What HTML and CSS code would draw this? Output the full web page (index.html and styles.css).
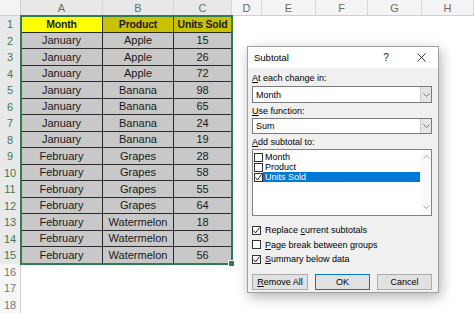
FILE: index.html
```html
<!DOCTYPE html>
<html lang="en">
<head>
  <meta charset="UTF-8" />
  <title>Subtotal</title>
  <link rel="stylesheet" href="styles.css">
</head>
<body>
  <div class="sheet">
    <div class="row col-heads">
      <div class="corner"></div>
      <div class="ch sel">A</div>
      <div class="ch sel">B</div>
      <div class="ch sel">C</div>
      <div class="ch">D</div>
      <div class="ch">E</div>
      <div class="ch">F</div>
      <div class="ch">G</div>
      <div class="ch">H</div>
    </div>
    <div id="rows"></div>
    <div class="selection"></div>
  </div>

  <div class="dialog">
    <div class="titlebar">
      <span class="title">Subtotal</span>
      <span class="tb-btn">?</span>
      <span class="tb-btn close"><svg width="9" height="9" viewBox="0 0 9 9"><path d="M0.5,0.5 L8.5,8.5 M8.5,0.5 L0.5,8.5" stroke="#222" stroke-width="0.9"/></svg></span>
    </div>
    <div class="dialog-body">
      <div class="label"><u>A</u>t each change in:</div>
      <div class="select tall">
        <span class="value">Month</span>
        <span class="arrow"><svg width="7" height="4" viewBox="0 0 7 4"><polyline points="0.5,0.5 3.5,3.5 6.5,0.5" fill="none" stroke="#777" stroke-width="1"/></svg></span>
      </div>
      <div class="label"><u>U</u>se function:</div>
      <div class="select">
        <span class="value">Sum</span>
        <span class="arrow"><svg width="7" height="4" viewBox="0 0 7 4"><polyline points="0.5,0.5 3.5,3.5 6.5,0.5" fill="none" stroke="#777" stroke-width="1"/></svg></span>
      </div>
      <div class="label"><u>A</u>dd subtotal to:</div>
      <div class="listbox">
        <div class="items">
          <div class="item"><span class="box"></span><span class="text">Month</span></div>
          <div class="item"><span class="box"></span><span class="text">Product</span></div>
          <div class="item"><span class="box"><svg width="9" height="9" viewBox="0 0 9 9"><polyline points="1.5,4.5 3.5,7 7.5,1.5" fill="none" stroke="#222" stroke-width="1"/></svg></span><span class="text active">Units Sold</span></div>
        </div>
        <div class="scrollbar">
          <svg width="7" height="4" viewBox="0 0 7 4"><polyline points="0.5,3.5 3.5,0.5 6.5,3.5" fill="none" stroke="#aaa" stroke-width="1"/></svg>
          <svg width="7" height="4" viewBox="0 0 7 4"><polyline points="0.5,0.5 3.5,3.5 6.5,0.5" fill="none" stroke="#aaa" stroke-width="1"/></svg>
        </div>
      </div>
      <div class="options">
        <div class="option"><span class="box"><svg width="9" height="9" viewBox="0 0 9 9"><polyline points="1.5,4.5 3.5,7 7.5,1.5" fill="none" stroke="#222" stroke-width="1"/></svg></span><span>Replace <u>c</u>urrent subtotals</span></div>
        <div class="option"><span class="box"></span><span><u>P</u>age break between groups</span></div>
        <div class="option"><span class="box"><svg width="9" height="9" viewBox="0 0 9 9"><polyline points="1.5,4.5 3.5,7 7.5,1.5" fill="none" stroke="#222" stroke-width="1"/></svg></span><span><u>S</u>ummary below data</span></div>
      </div>
      <div class="buttons">
        <div class="btn wide"><span><u>R</u>emove All</span></div>
        <div class="btn default">OK</div>
        <div class="btn">Cancel</div>
      </div>
    </div>
  </div>

  <script>
    const data = [
      ["Month", "Product", "Units Sold"],
      ["January", "Apple", 15],
      ["January", "Apple", 26],
      ["January", "Apple", 72],
      ["January", "Banana", 98],
      ["January", "Banana", 65],
      ["January", "Banana", 24],
      ["January", "Banana", 19],
      ["February", "Grapes", 28],
      ["February", "Grapes", 58],
      ["February", "Grapes", 55],
      ["February", "Grapes", 64],
      ["February", "Watermelon", 18],
      ["February", "Watermelon", 63],
      ["February", "Watermelon", 56]
    ];

    const rows = document.getElementById("rows");
    for (let i = 0; i < 18; i++) {
      const row = document.createElement("div");
      row.className = "row";
      const cells = data[i];
      let html = `<div class="rh ${cells ? "sel" : ""}">${i + 1}</div>`;
      if (cells) {
        cells.forEach((value, c) => {
          let cls = "cell";
          if (i === 0) cls += c === 0 ? " head active" : " head";
          html += `<div class="${cls}">${value}</div>`;
        });
      } else {
        html += `<div></div><div></div><div></div>`;
      }
      html += `<div></div><div></div><div></div><div></div><div></div>`;
      row.innerHTML = html;
      rows.appendChild(row);
    }
  </script>
</body>
</html>
```

FILE: styles.css
```css
/* Page */
body {
  margin: 0;
  width: 474px;
  height: 315px;
  overflow: hidden;
  background: #ffffff;
  font-family: "Liberation Sans", Arial, sans-serif;
}

/* Spreadsheet */
.sheet {
  position: relative;
}

.row {
  display: grid;
  grid-template-columns: 21px 82px 71px 58px 30px 54px 52px 54px 52px;
  height: 16.5px;
  font-size: 11px;
}

.col-heads {
  height: 16px;
  background: #f4f4f4;
  border-bottom: 1px solid #d0d0d0;
  box-sizing: border-box;
}

.corner {
  border-right: 1px solid #d0d0d0;
}

.ch {
  display: flex;
  align-items: center;
  justify-content: center;
  color: #6a6a6a;
  border-right: 1px solid #d6d6d6;
}

.ch.sel {
  background: #e8e8e8;
  color: #557a62;
}

.rh {
  display: flex;
  align-items: center;
  justify-content: center;
  color: #777777;
  background: #f6f6f6;
  border-right: 1px solid #d0d0d0;
}

.rh.sel {
  background: #e9e9e9;
  color: #3f7a56;
}

.cell {
  display: flex;
  align-items: center;
  justify-content: center;
  background: #c8c8c8;
  color: #1a1a1a;
  border-right: 1px solid #2a2a2a;
  border-bottom: 1px solid #2a2a2a;
  box-sizing: border-box;
}

.cell.head {
  background: #c9c200;
  font-weight: bold;
  font-size: 10.5px;
  letter-spacing: -0.2px;
}

.cell.head.active {
  background: #ffff00;
}

.selection {
  position: absolute;
  left: 20px;
  top: 15px;
  width: 213px;
  height: 250px;
  border: 2px solid #2e7d4f;
  box-sizing: border-box;
  pointer-events: none;
}

.selection::after {
  content: "";
  position: absolute;
  right: -4px;
  bottom: -4px;
  width: 5px;
  height: 5px;
  background: #2e7d4f;
  border: 1px solid #ffffff;
}

/* Subtotal dialog */
.dialog {
  position: absolute;
  left: 247px;
  top: 46px;
  width: 192px;
  height: 247px;
  box-sizing: border-box;
  background: #f0f0f0;
  border: 1px solid #a0a0a0;
  box-shadow: 2px 4px 12px rgba(0, 0, 0, 0.3);
  font-size: 9px;
  color: #000000;
  display: flex;
  flex-direction: column;
}

.titlebar {
  height: 21px;
  background: #ffffff;
  display: flex;
  align-items: center;
  padding: 0 7px 0 6px;
  font-size: 9.5px;
}

.title {
  flex: 1;
}

.tb-btn {
  width: 20px;
  display: flex;
  justify-content: center;
  font-size: 10px;
  color: #222222;
}

.tb-btn.close {
  margin-left: 15px;
}

.dialog-body {
  padding: 0 6px 0 4px;
  display: flex;
  flex-direction: column;
}

.label {
  line-height: 12px;
  margin-top: 2px;
}

.label:first-child {
  margin-top: 4px;
}

.select {
  height: 16px;
  margin-top: 1px;
  display: flex;
  background: #ffffff;
  border: 1px solid #7a7a7a;
  box-sizing: border-box;
}

.select.tall {
  height: 17px;
  margin-top: 2px;
}

.select .value {
  flex: 1;
  display: flex;
  align-items: center;
  padding-left: 3px;
}

.arrow {
  width: 10px;
  display: flex;
  align-items: center;
  justify-content: center;
  background: #e5e5e5;
  border-left: 1px solid #cfcfcf;
}

.listbox {
  height: 67px;
  margin-top: 1px;
  display: flex;
  background: #ffffff;
  border: 1px solid #828282;
  box-sizing: border-box;
}

.items {
  flex: 1;
  padding-top: 2px;
}

.item {
  height: 10px;
  display: flex;
  align-items: center;
}

.item .box {
  margin-left: 1px;
}

.item .text {
  flex: 1;
  height: 10px;
  line-height: 10px;
  padding-left: 2px;
  margin-right: 1px;
}

.item .text.active {
  background: #0078d7;
  color: #ffffff;
}

.scrollbar {
  width: 10px;
  display: flex;
  flex-direction: column;
  justify-content: space-between;
  align-items: center;
  padding: 5px 0 6px;
  background: #fafafa;
}

.box {
  width: 9px;
  height: 9px;
  box-sizing: border-box;
  border: 1px solid #333333;
  background: #ffffff;
  display: flex;
  flex-shrink: 0;
}

.box svg {
  margin: -1px;
}

.options {
  margin-top: 7px;
}

.option {
  height: 14.5px;
  display: flex;
  align-items: center;
  gap: 4px;
}

.buttons {
  display: flex;
  gap: 7px;
  margin-top: 7px;
}

.btn {
  width: 55px;
  height: 16px;
  box-sizing: border-box;
  display: flex;
  align-items: center;
  justify-content: center;
  background: #e1e1e1;
  border: 1px solid #adadad;
}

.btn.wide {
  width: 56px;
}

.btn.default {
  border-color: #0078d7;
}
```
